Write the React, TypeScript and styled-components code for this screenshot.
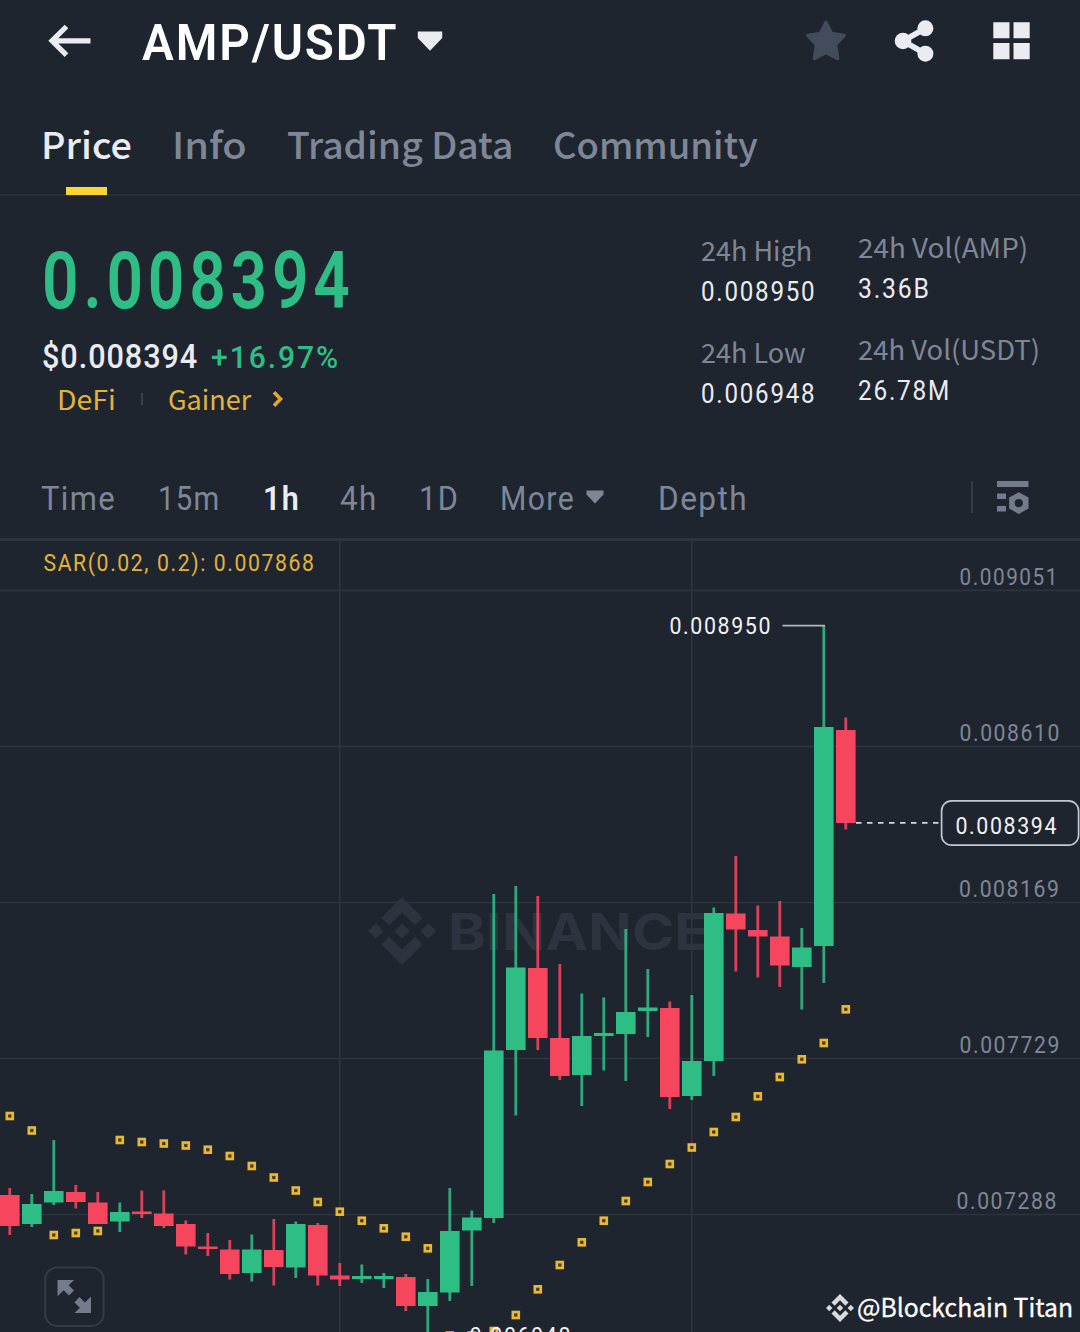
import React, { useLayoutEffect, useRef, useState } from "react";
import styled, { createGlobalStyle } from "styled-components";

const color = {
  bg: "#1f252f",
  line: "#2d343f",
  text: "#eaecf2",
  muted: "#7f8797",
  green: "#2ebd85",
  red: "#f6465d",
  gold: "#e2b33a",
  yellow: "#fcd535",
};

const sans = `"Noto Sans CJK SC", "Open Sans", sans-serif`;
const din = `Roboto, "Liberation Sans", sans-serif`;

const GlobalStyle = createGlobalStyle`
  body { margin: 0; background: ${color.bg}; }
  * { box-sizing: border-box; }
`;

const Screen = styled.main`
  width: 1080px;
  height: 1332px;
  overflow: hidden;
  display: flex;
  flex-direction: column;
  background: ${color.bg};
  color: ${color.text};
`;

/* Text condensed or expanded to a given measure */
const FitBox = styled.span<{ $w: number }>`
  display: block;
  flex: none;
  width: ${(p) => p.$w}px;
  white-space: nowrap;
`;
const FitInner = styled.span`
  display: inline-block;
  transform-origin: 0 50%;
`;

function Fit({ w, children }: { w: number; children: React.ReactNode }) {
  const ref = useRef<HTMLSpanElement>(null);
  const [scale, setScale] = useState(1);
  useLayoutEffect(() => {
    if (ref.current && ref.current.offsetWidth) setScale(w / ref.current.offsetWidth);
  }, [w]);
  return (
    <FitBox $w={w}>
      <FitInner ref={ref} style={{ transform: `scaleX(${scale})` }}>
        {children}
      </FitInner>
    </FitBox>
  );
}

const Header = styled.header`
  display: flex;
  align-items: center;
  flex: none;
  height: 82px;
  padding: 0 49px 0 48px;
`;
const Title = styled.h1`
  margin: 0 19px 0 50px;
  padding-top: 3px;
  font: 600 50px/50px ${din};
  letter-spacing: 2px;
  color: #fff;
`;
const Actions = styled.div`
  display: flex;
  align-items: center;
  margin-left: auto;
`;
const ActionIcon = styled.svg<{ $gap?: number }>`
  display: block;
  margin-left: ${(p) => p.$gap ?? 0}px;
`;

const Tabs = styled.nav`
  display: flex;
  align-items: stretch;
  flex: none;
  height: 114px;
  gap: 40px;
  padding: 42px 0 0 41px;
  border-bottom: 2px solid #29303a;
`;
const Tab = styled.div<{ $active?: boolean }>`
  display: flex;
  flex-direction: column;
  align-items: center;
  height: 72px;
  font: 500 37px/38px ${sans};
  color: ${(p) => (p.$active ? color.text : color.muted)};
`;
const Underline = styled.i`
  width: 41px;
  height: 8px;
  margin-top: auto;
  margin-bottom: 1px;
  background: ${color.yellow};
`;

const Summary = styled.section`
  display: flex;
  flex: none;
  height: 264px;
`;
const PriceColumn = styled.div`
  width: 701px;
  padding: 45px 0 0 42px;
`;
const LastPrice = styled.div`
  font: 600 80px/80px ${din};
  letter-spacing: 6px;
  color: ${color.green};
`;
const SubPrice = styled.div`
  display: flex;
  align-items: baseline;
  gap: 13px;
  height: 34px;
  margin-top: 19px;
  font: 500 33px/34px ${din};
  letter-spacing: 1px;
`;
const Change = styled.span`
  font-size: 31px;
  letter-spacing: 2px;
  color: ${color.green};
`;
const Tags = styled.div`
  display: flex;
  align-items: center;
  height: 28px;
  margin-top: 11px;
  padding-left: 15px;
  font: 400 27px/28px ${sans};
  color: ${color.gold};
`;
const TagDivider = styled.i`
  width: 2px;
  height: 12px;
  margin: 0 25px 0 25px;
  background: #3a414c;
`;
const Chevron = styled.svg`
  margin-left: 21px;
`;
const StatColumn = styled.div<{ $top: number; $w: number }>`
  flex: none;
  width: ${(p) => p.$w}px;
  padding-top: ${(p) => p.$top}px;
`;
const Stat = styled.div`
  display: flex;
  flex-direction: column;
  gap: 14px;
  margin-bottom: 32px;
`;
const StatLabel = styled.div`
  font: 400 27px/28px ${sans};
  color: ${color.muted};
`;
const StatValue = styled.div`
  font: 400 27.5px/28px ${din};
  letter-spacing: 2px;
`;

const Intervals = styled.nav`
  display: flex;
  align-items: center;
  flex: none;
  height: 81px;
  padding-left: 41px;
  border-bottom: 3px solid ${color.line};
`;
const Interval = styled.div<{ $active?: boolean; $gap?: number }>`
  margin-left: ${(p) => p.$gap ?? 0}px;
  font: ${(p) => (p.$active ? 600 : 400)} 33px/34px ${din};
  letter-spacing: 1.5px;
  color: ${(p) => (p.$active ? color.text : color.muted)};
`;
const Caret = styled.svg`
  display: block;
  margin-left: 11px;
  margin-bottom: 5px;
`;
const ToolDivider = styled.i`
  width: 2px;
  height: 32px;
  margin: -5px 24px 0 auto;
  background: #343b46;
`;
const ToolIcon = styled.svg`
  display: block;
  margin: -4px 51px 0 0;
`;

const ChartPanel = styled.section`
  flex: 1;
  min-height: 0;
`;
const ChartSvg = styled.svg`
  display: block;
  text { font-family: ${din}; }
`;
const Numerals = styled.g`
  letter-spacing: 1.8px;
`;

type Candle = [number, number, number, number, "r" | "g"];
/* high, open/close top, open/close bottom, low, direction */
const candles: Candle[] = [
  [1188, 1195, 1226, 1235, "r"],
  [1194, 1204, 1224, 1227, "g"],
  [1140, 1191, 1202.5, 1205, "g"],
  [1185, 1192, 1202, 1208.5, "r"],
  [1192, 1202.5, 1224, 1224, "r"],
  [1202.5, 1212, 1221.5, 1232, "g"],
  [1190.5, 1211.5, 1214, 1218, "r"],
  [1190.5, 1213.5, 1226, 1228, "r"],
  [1220.5, 1224, 1246.5, 1254.5, "r"],
  [1233, 1246.5, 1249, 1256, "r"],
  [1240, 1249.5, 1274, 1279.5, "r"],
  [1234.5, 1249.5, 1273, 1281.5, "g"],
  [1219, 1250, 1267, 1285.5, "r"],
  [1221.5, 1224, 1267.5, 1278, "g"],
  [1223, 1225, 1275.5, 1285.5, "r"],
  [1263, 1275.5, 1279.5, 1286, "r"],
  [1264.5, 1276, 1279, 1283, "g"],
  [1273, 1276, 1279, 1288, "g"],
  [1274, 1277, 1306, 1311, "r"],
  [1279, 1292, 1306, 1334, "g"],
  [1188, 1231, 1292.5, 1301, "g"],
  [1210.5, 1217.5, 1230.5, 1286, "g"],
  [894, 1050.5, 1218, 1223, "g"],
  [886, 967.5, 1050, 1115.5, "g"],
  [896, 968, 1038, 1050, "r"],
  [964, 1038, 1076, 1080, "r"],
  [993.5, 1036, 1075, 1106, "g"],
  [997.5, 1033, 1036, 1070.5, "g"],
  [929, 1012, 1034, 1081, "g"],
  [969, 1007.5, 1011, 1037, "g"],
  [1001.5, 1008, 1097, 1109, "r"],
  [995, 1061, 1096, 1100, "g"],
  [907.5, 913, 1061, 1076, "g"],
  [856, 913.5, 929.5, 971.5, "r"],
  [905.5, 930, 936.5, 977.5, "r"],
  [901, 936.5, 965.5, 987, "r"],
  [928, 947.5, 967, 1009.5, "g"],
  [626, 727, 946, 983, "g"],
  [717.5, 730, 823, 829.5, "r"],
];

const sar = [
  1116, 1130.5, 1235, 1233, 1231, 1140, 1142, 1143.5, 1145.5, 1149.7, 1156, 1166, 1177.5, 1190.5, 1202,
  1211.7, 1220.7, 1228.3, 1236.7, 1248.3, 1335.5, 1335.5, 1331, 1315, 1289.3, 1265, 1242.3, 1220.7,
  1201, 1182, 1164, 1147.5, 1132, 1117, 1096.3, 1077, 1059.3, 1043, 1009.3,
];

const axis: [number, number, string, number][] = [
  [959.5, 585, "0.009051", 99.5],
  [959.5, 741, "0.008610", 101.5],
  [959, 897, "0.008169", 101.5],
  [959.5, 1053, "0.007729", 101.5],
  [956.5, 1209, "0.007288", 101.5],
];

const xAt = (i: number) => 9.8 + 22 * i;

/* Diamond mark on a 24-unit grid */
function DiamondMark({ x, y, size, fill }: { x: number; y: number; size: number; fill: string }) {
  return (
    <svg x={x} y={y} width={size} height={size} viewBox="0 0 24 24" fill={fill}>
      <path d="M12 0 19.3 7.3 16.55 10 12 5.45 7.45 10 4.7 7.3Z" />
      <path d="M12 24 19.3 16.7 16.55 14 12 18.55 7.45 14 4.7 16.7Z" />
      <path d="M12 9.25 14.75 12 12 14.75 9.25 12Z" />
      <path d="M2.75 9.25 5.5 12 2.75 14.75 0 12Z" />
      <path d="M21.25 9.25 24 12 21.25 14.75 18.5 12Z" />
    </svg>
  );
}

function Chart() {
  return (
    <ChartSvg width="1080" height="791" viewBox="0 541 1080 791">
      <g stroke={color.line} strokeWidth="1.7">
        {[590.3, 746.3, 902.5, 1058.5, 1214.5].map((y) => (
          <line key={y} x1="0" x2="1080" y1={y} y2={y} />
        ))}
        {[339.8, 691.8].map((x) => (
          <line key={x} x1={x} x2={x} y1="541" y2="1332" />
        ))}
      </g>

      <DiamondMark x={368} y={897} size={68} fill="#2d333f" />
      <text
        x="448"
        y="950"
        fontSize="51"
        fontWeight="700"
        fill="#2d333f"
        textLength="261"
        lengthAdjust="spacingAndGlyphs"
        style={{ fontFamily: "Inter, sans-serif" }}
      >
        BINANCE
      </text>

      {candles.map(([hi, top, bottom, lo, dir], i) => (
        <g key={i} fill={dir === "g" ? color.green : color.red}>
          <rect x={xAt(i) - 1.4} y={hi} width="2.8" height={lo - hi} opacity="0.88" />
          <rect x={xAt(i) - 9.8} y={top} width="19.6" height={bottom - top} />
        </g>
      ))}

      {sar.map((y, i) => (
        <g key={i}>
          <rect x={xAt(i) - 4.3} y={y - 4.3} width="8.6" height="8.6" fill="#e5b936" />
          <rect x={xAt(i) - 1.6} y={y - 1.6} width="3.2" height="3.2" fill="#493613" />
        </g>
      ))}

      <Numerals>
        <text x="43.5" y="571" fontSize="24" fill={color.gold} textLength="272" lengthAdjust="spacingAndGlyphs">
          SAR(0.02, 0.2): 0.007868
        </text>
        <g fontSize="24" fill={color.muted}>
          {axis.map(([x, y, label, w]) => (
            <text key={label} x={x} y={y} textLength={w} lengthAdjust="spacingAndGlyphs">
              {label}
            </text>
          ))}
        </g>
        <g fontSize="24" fill="#f1f2f6">
          <text x="669.5" y="634" textLength="102.5" lengthAdjust="spacingAndGlyphs">0.008950</text>
          <text x="469.5" y="1344" textLength="102.5" lengthAdjust="spacingAndGlyphs">0.006948</text>
        </g>
      </Numerals>
      <line x1="782.5" x2="825" y1="625.7" y2="625.7" stroke="#b5b8bf" strokeWidth="1.8" />

      <line x1="856" x2="940" y1="822.8" y2="822.8" stroke="#d5d7dc" strokeWidth="1.8" strokeDasharray="5.5 5.5" />
      <rect x="941.6" y="800.8" width="137" height="44.4" rx="10" fill={color.bg} stroke="#c5c8ce" strokeWidth="1.7" />
      <Numerals>
        <text x="955.5" y="834" fontSize="24" fill="#f1f2f6" textLength="102.5" lengthAdjust="spacingAndGlyphs">
          0.008394
        </text>
      </Numerals>

      <rect x="45.2" y="1267.5" width="58.4" height="58.4" rx="12" fill={color.bg} stroke="#343b46" strokeWidth="2" />
      <g fill="#737b8c">
        <path d="M57.5 1280H74L68.7 1285.3 74 1290.6 69 1295.6 63.7 1290.3 57.5 1296.3Z" />
        <path d="M91 1313H74.5L79.8 1307.7 74.5 1302.4 79.5 1297 84.8 1302.4 91 1296.5Z" />
      </g>

      <DiamondMark x={826} y={1294} size={28} fill="#d9dadd" />
      <text
        x="857"
        y="1317"
        fontSize="25"
        fontWeight="400"
        fill="#fff"
        stroke="#fff"
        strokeWidth="0.3"
        textLength="216"
        lengthAdjust="spacingAndGlyphs"
        style={{ fontFamily: `"Noto Sans CJK SC", sans-serif` }}
      >
        @Blockchain Titan
      </text>
    </ChartSvg>
  );
}

export default function App() {
  return (
    <Screen>
      <GlobalStyle />
      <Header>
        <svg width="44" height="36" viewBox="0 0 44 36" fill="none" stroke={color.text} strokeWidth="5.2">
          <path d="M42.5 17.8H5M18.5 3.5 4 17.8 18.5 32.1" />
        </svg>
        <Title>
          <Fit w={256}>AMP/USDT</Fit>
        </Title>
        <svg width="26" height="22" viewBox="0 0 26 22" fill={color.text}>
          <path d="M.8 1.5H25.2V8L13 20.8.8 8Z" />
        </svg>
        <Actions>
          <ActionIcon width="42" height="44" viewBox="0 0 42 44">
            <path
              d="M21 3.5 26.5 14.5 39 16.5 30.5 25.5 32.5 39.5 21 33.5 9.5 39.5 11.5 25.5 3 16.5 15.5 14.5Z"
              fill="#434c5a"
              stroke="#434c5a"
              strokeWidth="3.6"
              strokeLinejoin="round"
            />
          </ActionIcon>
          <ActionIcon $gap={47} width="42" height="44" viewBox="0 0 42 44" fill={color.text}>
            <path d="M9 22 32 9M9 22 32 35" stroke={color.text} strokeWidth="5.5" />
            <circle cx="9" cy="22" r="8.3" />
            <circle cx="31.4" cy="9.3" r="8" />
            <circle cx="31.4" cy="34.7" r="8" />
          </ActionIcon>
          <ActionIcon $gap={57} width="38" height="38" viewBox="0 0 38 38" fill={color.text}>
            <path d="M0.3 0.3H16.5V16.3H0.3ZM20.5 0.3H36.7V16.3H20.5ZM0.3 21H16.5V37.3H0.3ZM20.5 21H36.7V37.3H20.5Z" />
          </ActionIcon>
        </Actions>
      </Header>

      <Tabs>
        <Tab $active>
          <Fit w={91}>Price</Fit>
          <Underline />
        </Tab>
        <Tab>
          <Fit w={75}>Info</Fit>
        </Tab>
        <Tab>
          <Fit w={226}>Trading Data</Fit>
        </Tab>
        <Tab>
          <Fit w={205}>Community</Fit>
        </Tab>
      </Tabs>

      <Summary>
        <PriceColumn>
          <LastPrice>
            <Fit w={313}>0.008394</Fit>
          </LastPrice>
          <SubPrice>
            <Fit w={156}>$0.008394</Fit>
            <Change>
              <Fit w={129}>+16.97%</Fit>
            </Change>
          </SubPrice>
          <Tags>
            <Fit w={59}>DeFi</Fit>
            <TagDivider />
            <Fit w={83}>Gainer</Fit>
            <Chevron width="14" height="18" viewBox="0 0 14 18" fill="none" stroke="#e2aa22" strokeWidth="3.6">
              <path d="M2 2.2 8.5 9 2 15.8" />
            </Chevron>
          </Tags>
        </PriceColumn>
        <StatColumn $top={40} $w={157}>
          <Stat>
            <StatLabel><Fit w={111}>24h High</Fit></StatLabel>
            <StatValue><Fit w={115}>0.008950</Fit></StatValue>
          </Stat>
          <Stat>
            <StatLabel><Fit w={105}>24h Low</Fit></StatLabel>
            <StatValue><Fit w={115}>0.006948</Fit></StatValue>
          </Stat>
        </StatColumn>
        <StatColumn $top={37} $w={222}>
          <Stat>
            <StatLabel><Fit w={170}>24h Vol(AMP)</Fit></StatLabel>
            <StatValue><Fit w={73}>3.36B</Fit></StatValue>
          </Stat>
          <Stat>
            <StatLabel><Fit w={182}>24h Vol(USDT)</Fit></StatLabel>
            <StatValue><Fit w={93}>26.78M</Fit></StatValue>
          </Stat>
        </StatColumn>
      </Summary>

      <Intervals>
        <Interval><Fit w={75}>Time</Fit></Interval>
        <Interval $gap={42}><Fit w={63}>15m</Fit></Interval>
        <Interval $active $gap={42}><Fit w={37}>1h</Fit></Interval>
        <Interval $gap={40}><Fit w={38}>4h</Fit></Interval>
        <Interval $gap={41}><Fit w={40}>1D</Fit></Interval>
        <Interval $gap={41}><Fit w={75}>More</Fit></Interval>
        <Caret width="18" height="14" viewBox="0 0 18 14" fill={color.muted}>
          <path d="M.5.5H17.5V4.5L9 13.5.5 4.5Z" />
        </Caret>
        <Interval $gap={54}><Fit w={90}>Depth</Fit></Interval>
        <ToolDivider />
        <ToolIcon width="32" height="33" viewBox="0 0 32 33" fill="#737b8c">
          <path d="M0 0H31.5V6H0ZM0 12.5H9V18H0ZM0 25H9V30.5H0Z" />
          <path
            fillRule="evenodd"
            d="M21.8 11.2 31.5 16.6V27.6L21.8 33 12.1 27.6V16.6ZM21.8 18A4.1 4.1 0 1 0 21.8 26.2 4.1 4.1 0 1 0 21.8 18Z"
          />
        </ToolIcon>
      </Intervals>

      <ChartPanel>
        <Chart />
      </ChartPanel>
    </Screen>
  );
}
